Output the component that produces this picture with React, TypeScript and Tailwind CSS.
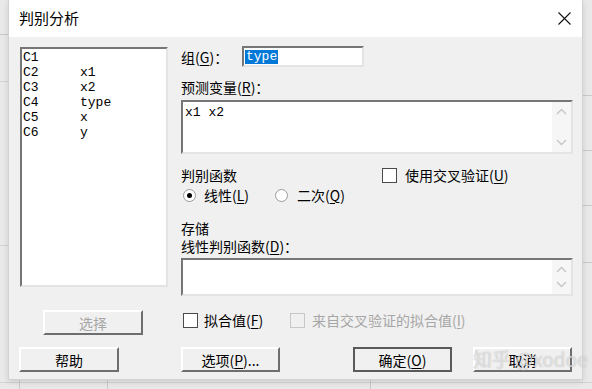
import type { ReactNode } from "react";

const cjk = { fontFamily: '"Noto Sans CJK SC", "Noto Sans", sans-serif' };
const mono = { fontFamily: '"Liberation Mono", "DejaVu Sans Mono", monospace' };

const columns = [
  ["C1", ""],
  ["C2", "x1"],
  ["C3", "x2"],
  ["C4", "type"],
  ["C5", "x"],
  ["C6", "y"],
];

function Key({ k }: { k: string }) {
  return (
    <>
      (<u className="underline-offset-2">{k}</u>)
    </>
  );
}

function Btn({ children, w = "w-[100px]", def, disabled }: { children: ReactNode; w?: string; def?: boolean; disabled?: boolean }) {
  const edge = def
    ? "border-2 border-[#5a5a5a]"
    : "border-2 border-t-white border-l-white border-r-[#6e6e6e] border-b-[#6e6e6e]";
  return (
    <div
      className={`flex h-[25px] ${w} items-center justify-center bg-[#f0f0f0] text-[14px] leading-none ${edge} ${
        disabled ? "text-[#a6a6a6]" : "text-black"
      }`}
    >
      {children}
    </div>
  );
}

function Sunken({ className, children }: { className: string; children?: ReactNode }) {
  return (
    <div
      className={`border-2 border-t-[#767676] border-l-[#767676] border-r-[#e4e4e4] border-b-[#e4e4e4] bg-white ${className}`}
    >
      {children}
    </div>
  );
}

function Chevron({ up }: { up?: boolean }) {
  return (
    <svg width="11" height="7" viewBox="0 0 11 7">
      <path d={up ? "M1 6 L5.5 1.5 L10 6" : "M1 1 L5.5 5.5 L10 1"} fill="none" stroke="#c4c4c4" strokeWidth="1.3" />
    </svg>
  );
}

function ScrollBox({ h, children }: { h: string; children?: ReactNode }) {
  return (
    <Sunken className={`flex w-[392px] ${h}`}>
      <div className="flex-1 px-[2px] pt-[2px] text-[13px] leading-[17px]" style={mono}>
        {children}
      </div>
      <div className="flex w-[19px] flex-col items-center justify-between bg-[#f6f6f6] py-[6px]">
        <Chevron up />
        <Chevron />
      </div>
    </Sunken>
  );
}

function Box({ disabled }: { disabled?: boolean }) {
  return (
    <div
      className={`h-[15px] w-[15px] border ${disabled ? "border-[#c8c8c8] bg-[#f0f0f0]" : "border-[#4a4a4a] bg-white"}`}
    />
  );
}

function Radio({ on }: { on?: boolean }) {
  return (
    <div className="flex h-[13px] w-[13px] items-center justify-center rounded-full border border-[#9a9a9a] bg-white">
      {on && <div className="h-[5px] w-[5px] rounded-full bg-black" />}
    </div>
  );
}

export default function App() {
  return (
    <div className="relative h-[389px] w-[592px] overflow-hidden bg-[#e9e9e9]" style={cjk}>
      {/* sheet grid behind the dialog */}
      <div className="absolute left-0 top-[34px] h-px w-[8px] bg-[#c9c9c9]" />
      <div className="absolute left-0 top-[81px] h-px w-[8px] bg-[#d4d4d4]" />
      <div className="absolute left-0 top-[245px] h-px w-[8px] bg-[#d4d4d4]" />
      <div className="absolute left-0 top-[382px] h-px w-[592px] bg-[#d4d4d4]" />
      <div className="absolute left-[19px] top-[380px] h-[9px] w-px bg-[#c9c9c9]" />
      <div className="absolute left-[107px] top-[380px] h-[9px] w-px bg-[#c9c9c9]" />
      <div className="absolute left-[370px] top-[380px] h-[9px] w-px bg-[#c9c9c9]" />
      <div className="absolute right-0 top-[95px] h-px w-[9px] bg-[#c9c9c9]" />
      <div className="absolute right-0 top-[150px] h-px w-[9px] bg-[#c9c9c9]" />
      <div className="absolute right-0 top-[205px] h-px w-[9px] bg-[#c9c9c9]" />
      <div className="absolute right-0 top-[262px] h-px w-[9px] bg-[#c9c9c9]" />

      <div className="absolute left-[8px] top-0 flex h-[380px] w-[575px] flex-col border border-t-0 border-[#d2d2d2] shadow-[0_2px_6px_rgba(0,0,0,0.12)]">
        <div className="flex h-[37px] items-center justify-between bg-white pl-[10px] pr-[11px]">
          <span className="text-[15px] text-black">判别分析</span>
          <svg width="13" height="13" viewBox="0 0 13 13">
            <path d="M0.5 0.5 L12.5 12.5 M12.5 0.5 L0.5 12.5" stroke="#111" strokeWidth="1.1" />
          </svg>
        </div>

        <div className="flex flex-1 flex-col bg-[#f0f0f0] pt-[9px]">
          <div className="flex h-[301px]">
            <div className="ml-[11px] mt-[1px] flex flex-col">
              <Sunken className="h-[240px] w-[148px] pl-[1px] pt-[1px]">
                <div className="text-[13px] leading-[15px] text-black" style={mono}>
                  {columns.map(([c, n]) => (
                    <div key={c} className="flex">
                      <span className="w-[57px]">{c}</span>
                      <span>{n}</span>
                    </div>
                  ))}
                </div>
              </Sunken>
              <div className="ml-[23px] mt-[23px]">
                <Btn disabled>选择</Btn>
              </div>
            </div>

            <div className="ml-[13px] flex w-[392px] flex-col text-[14px] leading-[18px] text-black">
              <div className="flex h-[21px] items-center">
                <span className="w-[61px]">
                  组<Key k="G" />：
                </span>
                <Sunken className="flex h-[21px] w-[122px] items-center pl-[1px]">
                  <span className="bg-[#0078d7] px-px text-[13px] leading-[14px] text-white" style={mono}>
                    type
                  </span>
                </Sunken>
              </div>

              <div className="mt-[11px]">
                预测变量<Key k="R" />：
              </div>
              <div className="mt-[4px]">
                <ScrollBox h="h-[54px]">x1 x2</ScrollBox>
              </div>

              <div className="mt-[12px] flex items-center">
                <span className="w-[201px]">判别函数</span>
                <Box />
                <span className="ml-[8px]">
                  使用交叉验证<Key k="U" />
                </span>
              </div>
              <div className="mt-[2px] flex items-center pl-[2px]">
                <Radio on />
                <span className="ml-[8px] w-[71px]">
                  线性<Key k="L" />
                </span>
                <Radio />
                <span className="ml-[9px]">
                  二次<Key k="Q" />
                </span>
              </div>

              <div className="mt-[15px]">存储</div>
              <div>
                线性判别函数<Key k="D" />：
              </div>
              <div className="mt-[3px]">
                <ScrollBox h="h-[38px]" />
              </div>

              <div className="mt-[15px] flex items-center pl-[2px]">
                <Box />
                <span className="ml-[6px] w-[86px]">
                  拟合值<Key k="F" />
                </span>
                <Box disabled />
                <span className="ml-[7px] text-[#a6a6a6]">
                  来自交叉验证的拟合值<Key k="I" />
                </span>
              </div>
            </div>
          </div>

          <div className="flex pl-[10px]">
            <Btn>帮助</Btn>
            <div className="ml-[62px]">
              <Btn w="w-[99px]">
                选项<Key k="P" />...
              </Btn>
            </div>
            <div className="ml-[73px]">
              <Btn w="w-[99px]" def>
                确定<Key k="O" />
              </Btn>
            </div>
            <div className="relative ml-[21px]">
              <Btn w="w-[99px]">取消</Btn>
              <span className="pointer-events-none absolute left-0 top-[-2px] whitespace-nowrap text-[19px] leading-[28px] text-white/60 [text-shadow:0_0_1px_rgba(120,120,120,0.6)]">
                知乎 @xodoe
              </span>
            </div>
          </div>
        </div>
      </div>
    </div>
  );
}
